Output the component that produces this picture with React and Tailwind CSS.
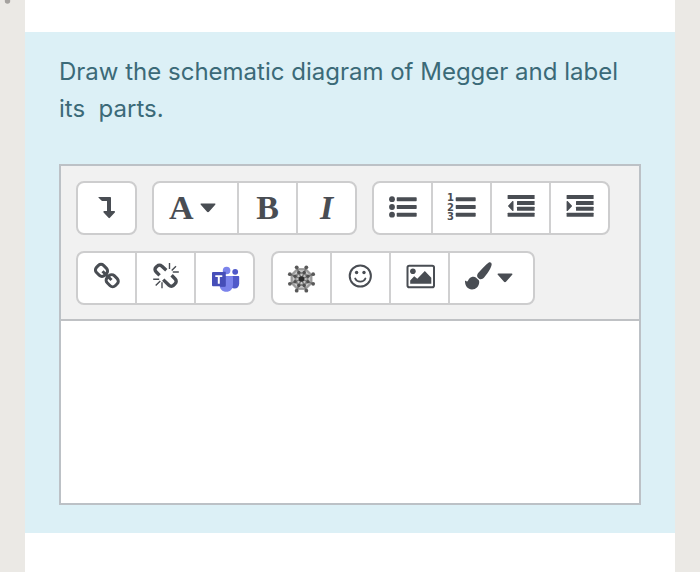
import { useState } from "react";
import clsx from "clsx";

function Icon({ children }) {
    return (
        <svg className="w-8 h-8 shrink-0" viewBox="0 0 32 32" fill="currentColor" aria-hidden="true">
            {children}
        </svg>
    );
}

function Caret() {
    return (
        <svg className="w-4 h-2.5 shrink-0" viewBox="0 0 16 10" fill="currentColor" aria-hidden="true">
            <path d="M1.3.5h13.4c.8 0 1 .7.5 1.3L9.2 8.6c-.7.8-1.7.8-2.4 0L.8 1.8C.3 1.2.5.5 1.3.5z" />
        </svg>
    );
}

function ToolButton({ label, wide, children, ...props }) {
    return (
        <button
            type="button"
            aria-label={label}
            title={label}
            className={clsx(
                "box-content flex h-[50px] items-center font-['Liberation_Serif',serif] text-[34px] font-bold leading-none text-[#494d53] hover:bg-gray-50",
                wide ? "w-[68px] pl-[15px]" : "w-[57px] justify-center"
            )}
            {...props}
        >
            {children}
        </button>
    );
}

function ToolGroup({ children }) {
    return (
        <div className="flex divide-x-2 divide-[#d0d0d1] overflow-hidden rounded-lg border-2 border-[#cdcdce] bg-white">
            {children}
        </div>
    );
}

const webAngles = [22.5, 67.5, 112.5, 157.5, 202.5, 247.5, 292.5, 337.5];

function webPoint(angle, radius) {
    const rad = (angle * Math.PI) / 180;
    return [15.5 + Math.cos(rad) * radius, 17 + Math.sin(rad) * radius];
}

function WebIcon() {
    const ring = (radius) => webAngles.map((a) => webPoint(a, radius).join(",")).join(" ");
    return (
        <Icon>
            <polygon points={ring(12)} fill="#cacaca" />
            <polygon points={ring(10.5)} fill="none" stroke="#9a9a9a" strokeWidth="2" />
            <polygon points={ring(6.5)} fill="none" stroke="#858585" strokeWidth="2" />
            {webAngles.map((a) => {
                const [x, y] = webPoint(a, 12.6);
                const [ix, iy] = webPoint(a, 7);
                return (
                    <g key={a}>
                        <line x1="15.5" y1="17" x2={x} y2={y} stroke="#777" strokeWidth="1.5" />
                        <circle cx={x} cy={y} r="1.9" fill="#585858" />
                        <circle cx={ix} cy={iy} r="1.7" fill="#505050" />
                    </g>
                );
            })}
            <circle cx="15.5" cy="17" r="2.8" fill="#2c2c2c" />
        </Icon>
    );
}

export default function App() {
    const [answer, setAnswer] = useState("");
    const [expanded, setExpanded] = useState(true);

    return (
        <div className="flex min-h-screen bg-[#ebe9e5] font-[Inter,sans-serif]">
            <div className="w-[25px] shrink-0 pl-1">
                <svg className="h-2 w-2" viewBox="0 0 8 8" aria-hidden="true">
                    <circle cx="3.5" cy="1" r="2.7" fill="#a5a29f" />
                </svg>
            </div>
            <main className="min-w-0 flex-1 bg-white pt-8 pb-10">
                <section className="bg-[#dcf0f6] px-[34px] pt-[21px] pb-7">
                    <label htmlFor="answer" className="block whitespace-pre-wrap text-2xl leading-[37px] text-[#3b6a78]">
                        {"Draw the schematic diagram of Megger and label its  parts."}
                    </label>

                    <div className="mt-[37px] border-2 border-[#bcc1c6] bg-white">
                        <div role="toolbar" className="flex flex-col gap-4 border-b-2 border-[#bfc1c4] bg-[#f1f1f1] px-[15px] pt-[15px] pb-3.5">
                            <div className="flex flex-wrap gap-[15px]">
                                <ToolGroup>
                                    <ToolButton label="Show more buttons" aria-expanded={expanded} onClick={() => setExpanded(!expanded)}>
                                        <Icon>
                                            <path d="M8 5h11.2c.5 0 .8.3.8.8V19h3.2c.8 0 1.1.8.6 1.4l-4.9 5.4c-.4.5-1 .5-1.4 0l-4.9-5.4c-.5-.6-.2-1.4.6-1.4H16V9h-4.6c-.3 0-.5-.1-.7-.3L7.6 5.8C7.2 5.4 7.5 5 8 5z" />
                                        </Icon>
                                    </ToolButton>
                                </ToolGroup>
                                <ToolGroup>
                                    <ToolButton label="Paragraph styles" wide>
                                        <span className="mr-1.5">A</span>
                                        <Caret />
                                    </ToolButton>
                                    <ToolButton label="Bold">B</ToolButton>
                                    <ToolButton label="Italic">
                                        <span className="italic">I</span>
                                    </ToolButton>
                                </ToolGroup>
                                <ToolGroup>
                                    <ToolButton label="Unordered list">
                                        <Icon>
                                            <circle cx="5" cy="7.2" r="2.9" />
                                            <circle cx="5" cy="15" r="2.9" />
                                            <circle cx="5" cy="22.7" r="2.9" />
                                            <rect x="9.7" y="5.2" width="20" height="4" rx=".7" />
                                            <rect x="9.7" y="13" width="20" height="4" rx=".7" />
                                            <rect x="9.7" y="20.7" width="20" height="4" rx=".7" />
                                        </Icon>
                                    </ToolButton>
                                    <ToolButton label="Ordered list">
                                        <Icon>
                                            <g className="font-['DejaVu_Sans',sans-serif] text-[10px] font-bold">
                                                <text x="1" y="9">1</text>
                                                <text x="1" y="18.5">2</text>
                                                <text x="1" y="28">3</text>
                                            </g>
                                            <rect x="9.7" y="5.2" width="20" height="4" rx=".7" />
                                            <rect x="9.7" y="13" width="20" height="4" rx=".7" />
                                            <rect x="9.7" y="20.7" width="20" height="4" rx=".7" />
                                        </Icon>
                                    </ToolButton>
                                    <ToolButton label="Outdent">
                                        <Icon>
                                            <rect x="2.6" y="3" width="27" height="4" rx=".5" />
                                            <rect x="12" y="9" width="17.6" height="4" rx=".5" />
                                            <rect x="12" y="14.8" width="17.6" height="4" rx=".5" />
                                            <rect x="2.6" y="20.7" width="27" height="4" rx=".5" />
                                            <path d="M8.5 9.6v8.8c0 .7-.6.9-1 .5l-4.2-4.3c-.4-.4-.4-.8 0-1.2L7.5 9.1c.4-.4 1-.2 1 .5z" />
                                        </Icon>
                                    </ToolButton>
                                    <ToolButton label="Indent">
                                        <Icon>
                                            <rect x="2.6" y="3" width="27" height="4" rx=".5" />
                                            <rect x="12" y="9" width="17.6" height="4" rx=".5" />
                                            <rect x="12" y="14.8" width="17.6" height="4" rx=".5" />
                                            <rect x="2.6" y="20.7" width="27" height="4" rx=".5" />
                                            <path d="M2.6 9.6v8.8c0 .7.6.9 1 .5l4.2-4.3c.4-.4.4-.8 0-1.2L3.6 9.1c-.4-.4-1-.2-1 .5z" />
                                        </Icon>
                                    </ToolButton>
                                </ToolGroup>
                            </div>
                            <div className="flex flex-wrap gap-4">
                                <ToolGroup>
                                    <ToolButton label="Link">
                                        <Icon>
                                            <g fill="none" stroke="currentColor" strokeWidth="3">
                                                <rect x="4.8" y="3.4" width="11.4" height="10" rx="3.6" transform="rotate(45 10.5 8.4)" />
                                                <rect x="15.5" y="13.7" width="11.4" height="10" rx="3.6" transform="rotate(45 21.2 18.7)" />
                                                <path d="M11.5 9.2l9 8.8" />
                                            </g>
                                        </Icon>
                                    </ToolButton>
                                    <ToolButton label="Unlink">
                                        <Icon>
                                            <g fill="none" stroke="currentColor" strokeWidth="3.4">
                                                <path d="M9.6 13.4L6 9.8C4.700 8.500 4.700 6.600 6 5.300L7.200 4.100c1.300-1.300 3.200-1.300 4.500 0l4.600 4.200" />
                                                <path d="M13.200 17.600l5.800 5.600c1.300 1.300 3.300 1.300 4.600 0l1.600-1.600c1.300-1.300 1.300-3.300 0-4.600l-3.600-3.700" />
                                                <path d="M19.500 1v6M26 4.200l-4.300 4.200M28.800 10h-6M3.200 17.300h6M10.300 19l-4.600 4.600M12 20.200v6" strokeWidth="1.4" />
                                            </g>
                                        </Icon>
                                    </ToolButton>
                                    <ToolButton label="Create Teams meeting">
                                        <Icon>
                                            <circle cx="26.2" cy="9.8" r="2.9" fill="#5059c9" />
                                            <path d="M21 14h8.2c.6 0 1 .4 1 1v6.5c0 3-1.9 5-4.6 5S21 24.500 21 21.500z" fill="#5059c9" />
                                            <circle cx="17.6" cy="8.5" r="3.8" fill="#7b83eb" />
                                            <path d="M10.500 14h12.300c.7 0 1.200.5 1.200 1.200v7.300c0 4.400-2.700 7.300-6.700 7.300s-6.800-2.900-6.800-7.300z" fill="#7b83eb" />
                                            <path d="M13.800 9.800h2.700v15h-5.400V14z" fill="#454cb5" />
                                            <rect x="3" y="10" width="13.600" height="14.300" rx="1" fill="#464eb8" />
                                            <path d="M6.300 13.200h7v1.800h-2.500v6.800H8.800V15H6.300z" fill="#fff" />
                                        </Icon>
                                    </ToolButton>
                                </ToolGroup>
                                <ToolGroup>
                                    <ToolButton label="Mind map">
                                        <WebIcon />
                                    </ToolButton>
                                    <ToolButton label="Emoji picker">
                                        <Icon>
                                            <circle cx="15.3" cy="14" r="10.600" fill="none" stroke="currentColor" strokeWidth="2" />
                                            <circle cx="11.600" cy="10.500" r="1.700" />
                                            <circle cx="19" cy="10.500" r="1.700" />
                                            <path d="M10.200 16.500c1.800 4.200 8.400 4.200 10.200 0" fill="none" stroke="currentColor" strokeWidth="1.900" strokeLinecap="round" />
                                        </Icon>
                                    </ToolButton>
                                    <ToolButton label="Insert or edit image">
                                        <Icon>
                                            <rect x="3.500" y="3.700" width="26.500" height="21.500" rx="1.800" fill="none" stroke="currentColor" strokeWidth="2" />
                                            <circle cx="8.900" cy="9.200" r="2.800" />
                                            <path d="M6.200 21.800v-3.400l4-4.200 3.100 2.600L20.800 9l6.500 6.800v6z" />
                                        </Icon>
                                    </ToolButton>
                                    <ToolButton label="Colour" wide>
                                        <Icon>
                                            <path d="M23.500.7c1.900-1 3.500.4 3.100 2.300-.6 3.200-4.900 9.700-7.500 12.600-1.400 1.600-3 2-4.600 1.400-1.800-.8-2.700-2.300-2.300-4 .4-1.500 1.300-2.500 2.600-3.800C17.500 6.500 20.600 2.500 23.500.7z" />
                                            <path d="M0 18.500c.4.200 1.500 1.100 2.200.9.800-.3 1.300-2 2.200-2.900 1.800-1.900 5-2.300 7-.6.700.6 1.200 1.500 2.200 2.200.5.5.7 1.500.6 2.400-.3 4-3.300 6.900-7.200 6.900C2.500 27.400-.2 23.500 0 18.500z" />
                                        </Icon>
                                        <Caret />
                                    </ToolButton>
                                </ToolGroup>
                            </div>
                        </div>
                        <textarea
                            id="answer"
                            rows={6}
                            value={answer}
                            onChange={(e) => setAnswer(e.target.value)}
                            className="block w-full resize-none px-3 pt-3 pb-3.5 text-lg leading-[26px] text-gray-700 outline-none"
                        />
                    </div>
                </section>
            </main>
            <div className="w-[25px] shrink-0" />
        </div>
    );
}
